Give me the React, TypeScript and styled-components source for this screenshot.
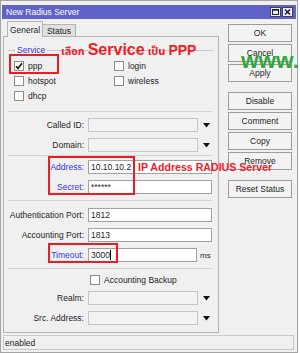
import styled, { createGlobalStyle } from "styled-components";

const GlobalStyle = createGlobalStyle`
  html, body {
    margin: 0;
    padding: 0;
    background: #ffffff;
  }
  body {
    font-family: "Liberation Sans", Arial, sans-serif;
    font-size: 8.5px;
    color: #1e1e1e;
  }
  * {
    box-sizing: border-box;
  }
`;

const Page = styled.div`
  position: relative;
  width: 300px;
  height: 353px;
  overflow: hidden;
`;

const Window = styled.div`
  display: flex;
  flex-direction: column;
  width: 298px;
  height: 353px;
  padding: 0 1px;
  background: #f0f0f0;
  border: 1px solid #a4a4a4;
`;

const TitleBar = styled.div`
  display: flex;
  align-items: center;
  justify-content: space-between;
  height: 14px;
  margin-top: 4px;
  padding: 0 3px 0 4px;
  background: #5f62c8;
  color: #ffffff;
`;

const Title = styled.span`
  font-size: 8.5px;
  line-height: 14px;
`;

const WinButtons = styled.div`
  display: flex;
  gap: 1px;
`;

const WinButton = styled.div`
  display: flex;
  align-items: center;
  justify-content: center;
  width: 11px;
  height: 10px;
  background: #ececec;
  border: 1px solid #3d3d62;
`;

const Body = styled.div`
  display: flex;
  align-items: flex-start;
  height: 314px;
  padding-left: 1px;
`;

const Main = styled.div`
  display: flex;
  flex-direction: column;
  width: 216px;
  padding-top: 2px;
`;

const Tabs = styled.div`
  display: flex;
  align-items: flex-end;
  height: 15px;
  padding-left: 4px;
`;

const Tab = styled.div<{ $active?: boolean }>`
  position: relative;
  z-index: ${(p) => (p.$active ? 1 : 0)};
  display: flex;
  align-items: center;
  justify-content: center;
  width: ${(p) => (p.$active ? 36 : 33)}px;
  height: ${(p) => (p.$active ? 16 : 12)}px;
  margin-bottom: ${(p) => (p.$active ? -1 : 0)}px;
  background: ${(p) => (p.$active ? "#f0f0f0" : "#e0e0e0")};
  border: 1px solid #b4b4b4;
  border-bottom: none;
  border-left: ${(p) => (p.$active ? "1px solid #b4b4b4" : "none")};
  font-size: 8.5px;
`;

const Panel = styled.div`
  display: flex;
  flex-direction: column;
  height: 297px;
  background: #f0f0f0;
  border: 1px solid #b4b4b4;
`;

const GroupTitle = styled.div`
  display: flex;
  align-items: center;
  gap: 2px;
  height: 14px;
  margin: 6px 5px 0 4px;
  color: #3535e0;
`;

const GroupLine = styled.div<{ $grow?: boolean }>`
  flex: ${(p) => (p.$grow ? 1 : "0 0 7px")};
  height: 1px;
  background: #c8c8c8;
`;

const CheckGrid = styled.div`
  display: grid;
  grid-template-columns: 100px 100px;
  grid-auto-rows: 15px;
  margin-top: 1px;
  padding-left: 10px;
`;

const CheckItem = styled.label`
  display: flex;
  align-items: center;
  gap: 4px;
`;

const Box = styled.span`
  display: flex;
  align-items: center;
  justify-content: center;
  width: 10px;
  height: 10px;
  background: #ffffff;
  border: 1px solid #8c8c8c;
`;

const Separator = styled.div<{ $top: number }>`
  height: 1px;
  margin: ${(p) => p.$top}px 6px 0 4px;
  background: #d2d2d2;
`;

const FormRow = styled.div<{ $top?: number }>`
  display: flex;
  align-items: center;
  gap: 4px;
  height: 20px;
  margin-top: ${(p) => p.$top ?? 0}px;
`;

const Label = styled.span<{ $blue?: boolean }>`
  width: 80px;
  text-align: right;
  white-space: nowrap;
  color: ${(p) => (p.$blue ? "#3535e0" : "#1e1e1e")};
`;

const Field = styled.div<{ $width: number; $disabled?: boolean }>`
  display: flex;
  align-items: center;
  width: ${(p) => p.$width}px;
  height: 14px;
  padding: 0 2px;
  background: ${(p) => (p.$disabled ? "#f2f2f2" : "#ffffff")};
  border: 1px solid ${(p) => (p.$disabled ? "#c6c6c6" : "#a2a2a2")};
  font-size: 8.5px;
  white-space: nowrap;
`;

const Caret = styled.span`
  width: 1px;
  height: 10px;
  margin-left: 0.5px;
  background: #000000;
`;

const Arrow = styled.svg`
  margin-left: 1px;
`;

const Unit = styled.span`
  margin-left: -1px;
  font-size: 8px;
`;

const BackupRow = styled.label`
  display: flex;
  align-items: center;
  gap: 4px;
  height: 16px;
  margin-top: 3px;
  padding-left: 86px;
`;

const ButtonsCol = styled.div`
  display: flex;
  flex-direction: column;
  width: 64px;
  margin-left: 9px;
  padding-top: 5px;
`;

const Button = styled.div<{ $gap?: boolean }>`
  display: flex;
  align-items: center;
  justify-content: center;
  height: 18px;
  margin-top: ${(p) => (p.$gap ? 10 : 2)}px;
  background: #f3f3f3;
  border: 1px solid #9c9c9c;
  font-size: 8.5px;
  &:first-child {
    margin-top: 0;
  }
`;

const StatusBar = styled.div`
  display: flex;
  align-items: center;
  width: 291px;
  height: 15px;
  margin: 2px 0 0 1px;
  padding-left: 1px;
  border: 1px solid #c9c9c9;
  font-size: 8.5px;
`;

const RedBox = styled.div<{ $x: number; $y: number; $w: number; $h: number }>`
  position: absolute;
  left: ${(p) => p.$x}px;
  top: ${(p) => p.$y}px;
  width: ${(p) => p.$w}px;
  height: ${(p) => p.$h}px;
  border: 2px solid #ec1c24;
`;

const Note = styled.div<{ $x: number; $y: number }>`
  position: absolute;
  left: ${(p) => p.$x}px;
  top: ${(p) => p.$y}px;
  display: flex;
  align-items: baseline;
  gap: 3px;
  color: #f0202a;
  font-weight: bold;
  white-space: nowrap;
`;

const NoteText = styled.span<{ $size: number }>`
  font-size: ${(p) => p.$size}px;
  font-family: "Liberation Sans", "Noto Sans Thai", "Noto Sans Thai UI", Loma, Garuda, "Tlwg Typo", sans-serif;
`;

const Watermark = styled.div`
  position: absolute;
  left: 241px;
  top: 50px;
  color: #34a541;
  font-size: 22.5px;
  font-weight: bold;
  line-height: 22px;
  white-space: nowrap;
`;

function Check({ checked }: { checked?: boolean }) {
  return (
    <Box>
      {checked && (
        <svg width="8" height="8" viewBox="0 0 8 8">
          <path d="M1 4.2 L3 6.4 L7 1.2" fill="none" stroke="#111" strokeWidth="1.6" />
        </svg>
      )}
    </Box>
  );
}

function DropArrow() {
  return (
    <Arrow width="7" height="5" viewBox="0 0 7 5">
      <path d="M0 0 H7 L3.5 4.5 Z" fill="#111" />
    </Arrow>
  );
}

export default function App() {
  return (
    <Page>
      <GlobalStyle />
      <Window>
        <TitleBar>
          <Title>New Radius Server</Title>
          <WinButtons>
            <WinButton>
              <svg width="7" height="6" viewBox="0 0 7 6">
                <rect x="0.5" y="0.5" width="6" height="5" fill="none" stroke="#222" />
                <line x1="0" y1="1.2" x2="7" y2="1.2" stroke="#222" />
              </svg>
            </WinButton>
            <WinButton>
              <svg width="7" height="6" viewBox="0 0 7 6">
                <path d="M1 0.5 L6 5.5 M6 0.5 L1 5.5" stroke="#222" strokeWidth="1.5" />
              </svg>
            </WinButton>
          </WinButtons>
        </TitleBar>
        <Body>
          <Main>
            <Tabs>
              <Tab $active>General</Tab>
              <Tab>Status</Tab>
            </Tabs>
            <Panel>
              <GroupTitle>
                <GroupLine />
                <span>Service</span>
                <GroupLine $grow />
              </GroupTitle>
              <CheckGrid>
                <CheckItem>
                  <Check checked />
                  ppp
                </CheckItem>
                <CheckItem>
                  <Check />
                  login
                </CheckItem>
                <CheckItem>
                  <Check />
                  hotspot
                </CheckItem>
                <CheckItem>
                  <Check />
                  wireless
                </CheckItem>
                <CheckItem>
                  <Check />
                  dhcp
                </CheckItem>
              </CheckGrid>
              <Separator $top={8} />
              <FormRow $top={3}>
                <Label>Called ID:</Label>
                <Field $width={110} $disabled />
                <DropArrow />
              </FormRow>
              <FormRow>
                <Label>Domain:</Label>
                <Field $width={110} $disabled />
                <DropArrow />
              </FormRow>
              <Separator $top={0} />
              <FormRow $top={1}>
                <Label $blue>Address:</Label>
                <Field $width={124}>10.10.10.2</Field>
              </FormRow>
              <FormRow>
                <Label $blue>Secret:</Label>
                <Field $width={124}>******</Field>
              </FormRow>
              <Separator $top={3} />
              <FormRow $top={4}>
                <Label>Authentication Port:</Label>
                <Field $width={124}>1812</Field>
              </FormRow>
              <FormRow>
                <Label>Accounting Port:</Label>
                <Field $width={124}>1813</Field>
              </FormRow>
              <FormRow>
                <Label $blue>Timeout:</Label>
                <Field $width={109}>
                  3000
                  <Caret />
                </Field>
                <Unit>ms</Unit>
              </FormRow>
              <Separator $top={3} />
              <BackupRow>
                <Check />
                Accounting Backup
              </BackupRow>
              <FormRow>
                <Label>Realm:</Label>
                <Field $width={110} $disabled />
                <DropArrow />
              </FormRow>
              <FormRow>
                <Label>Src. Address:</Label>
                <Field $width={110} $disabled />
                <DropArrow />
              </FormRow>
            </Panel>
          </Main>
          <ButtonsCol>
            <Button>OK</Button>
            <Button>Cancel</Button>
            <Button>Apply</Button>
            <Button $gap>Disable</Button>
            <Button>Comment</Button>
            <Button>Copy</Button>
            <Button>Remove</Button>
            <Button $gap>Reset Status</Button>
          </ButtonsCol>
        </Body>
        <StatusBar>enabled</StatusBar>
      </Window>

      <RedBox $x={9} $y={54} $w={50} $h={20} />
      <RedBox $x={48} $y={156} $w={87} $h={39} />
      <RedBox $x={48} $y={243} $w={70} $h={20} />

      <Note $x={61} $y={41}>
        <NoteText $size={11}>เลือก</NoteText>
        <NoteText $size={16}>Service</NoteText>
        <NoteText $size={11}>เป็น</NoteText>
        <NoteText $size={14}>PPP</NoteText>
      </Note>
      <Note $x={138} $y={161}>
        <NoteText $size={10.6}>IP Address RADIUS Server</NoteText>
      </Note>
      <Watermark>www.</Watermark>
    </Page>
  );
}
